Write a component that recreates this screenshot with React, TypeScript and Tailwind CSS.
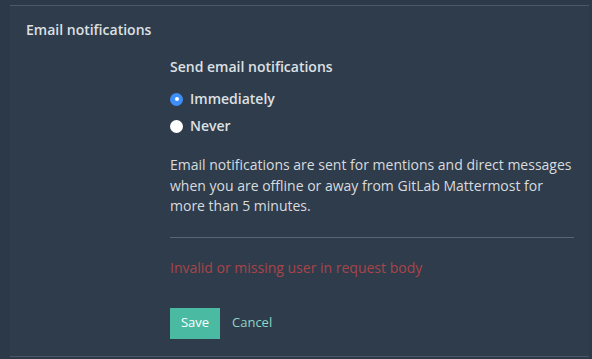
import React from 'react';

export default function App() {
    return (
        <div
            className="w-[592px] h-[359px] bg-[#2c3949] pt-[5px] overflow-hidden text-[#dde0e3]"
            style={{ fontFamily: '"Open Sans", "Noto Sans", sans-serif' }}
        >
            <div className="ml-[10px] mr-[3px] bg-[#2f3c4c] border-t border-b border-[#4b5868] pb-[17px]">
                <div className="pl-[16px] pt-[14px] text-[14px] leading-[20px] font-semibold">Email notifications</div>

                <div className="ml-[160px] mr-[15px] mt-[17px]">
                    <div className="text-[14px] leading-[20px] font-semibold">Send email notifications</div>

                    <label className="flex items-center gap-[7px] mt-[12px] text-[14px] leading-[20px] font-semibold">
                        <span className="w-[13px] h-[13px] rounded-full bg-[#3d8ef8] flex items-center justify-center">
                            <span className="w-[4px] h-[4px] rounded-full bg-white" />
                        </span>
                        Immediately
                    </label>
                    <label className="flex items-center gap-[7px] mt-[7px] text-[14px] leading-[20px] font-semibold">
                        <span className="w-[13px] h-[13px] rounded-full bg-white" />
                        Never
                    </label>

                    <p className="mt-[19px] text-[14px] leading-[20.5px] text-[#d8dbde]">
                        Email notifications are sent for mentions and direct messages when you are offline or away
                        from GitLab Mattermost for more than 5 minutes.
                    </p>

                    <div className="mt-[20px] border-t border-[#586574]" />

                    <div className="mt-[20px] text-[14px] leading-[20px] text-[#a94448]">Invalid or missing user in request body</div>

                    <div className="mt-[30px] flex items-center gap-[12px]">
                        <button className="h-[31px] w-[50px] bg-[#4bbaa2] text-white text-[13px] flex items-center justify-center">
                            Save
                        </button>
                        <button className="text-[13px] text-[#8cd6c4]">Cancel</button>
                    </div>
                </div>
            </div>
        </div>
    );
}
